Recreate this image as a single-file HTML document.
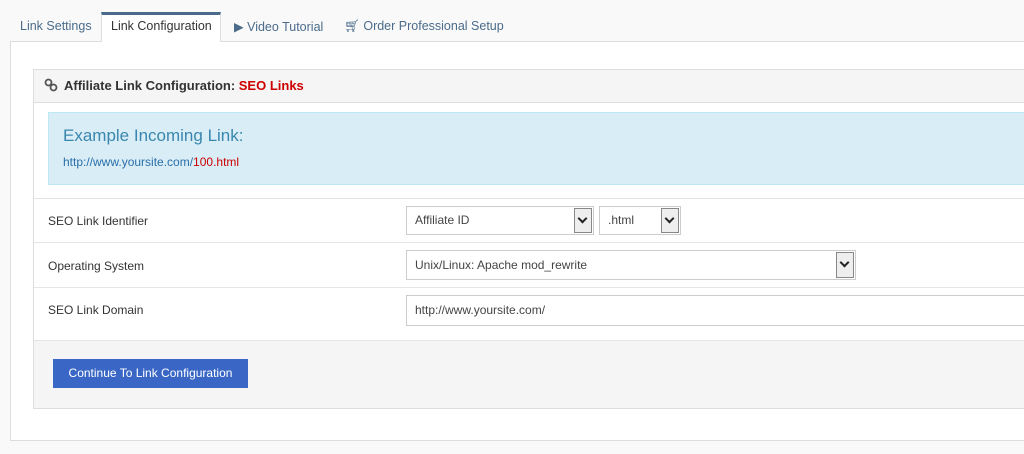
<!DOCTYPE html>
<html><head><style>
body{margin:0;width:1024px;height:454px;background:#f9f9f9;font-family:"Liberation Sans",sans-serif;font-size:12px;color:#333;position:relative;overflow:hidden}
.a{position:absolute}
.tab{position:absolute;top:19px;color:#4a6b8a;font-size:12.5px}
.sel{position:absolute;background:#fff;border:1px solid #ccc;box-sizing:border-box;padding-left:8px;font-size:12px;color:#444}
.arr{position:absolute;right:1px;top:1px;bottom:1px;width:18px;background:#eee;border:1px solid #888;box-sizing:border-box}
.arr:after{content:"";position:absolute;left:4px;top:calc(50% - 6px);width:5px;height:5px;border-right:2px solid #222;border-bottom:2px solid #222;transform:rotate(45deg)}
.lbl{position:absolute;left:48px;font-size:12px;color:#333}
.sep{position:absolute;left:34px;right:0;height:1px;background:#e5e5e5}
</style></head><body>
<div class="a" style="left:10px;top:41px;right:-5px;height:398px;background:#fff;border:1px solid #ddd"></div>
<div class="a" style="left:101px;top:12px;width:120px;height:30px;background:#fff;border:1px solid #ddd;border-top:3px solid #4a6b8a;border-bottom:none;box-sizing:border-box"></div>
<div class="tab" style="left:20px">Link Settings</div>
<div class="tab" style="left:111px;color:#333">Link Configuration</div>
<div class="tab" style="left:234px">▶ Video Tutorial</div>
<div class="tab" style="left:344px">🛒︎ Order Professional Setup</div>
<div class="a" style="left:33px;top:69px;right:-5px;height:338px;background:#fff;border:1px solid #ddd"></div>
<div class="a" style="left:34px;top:70px;right:0;height:32px;background:#f5f5f5;border-bottom:1px solid #ddd"></div>
<svg class="a" style="left:44px;top:78px" width="14" height="14" viewBox="0 0 14 14" fill="none" stroke="#555" stroke-width="1.8"><circle cx="4.5" cy="4.5" r="3"/><circle cx="9.5" cy="9.5" r="3"/></svg>
<div class="a" style="left:64px;top:78px;font-size:13px;font-weight:bold;color:#333">Affiliate Link Configuration: <span style="color:#c00">SEO Links</span></div>
<div class="a" style="left:48px;top:112px;right:-5px;height:71px;background:#d9edf7;border:1px solid #bce8f1"></div>
<div class="a" style="left:63px;top:126px;font-size:17px;color:#3a87ad">Example Incoming Link:</div>
<div class="a" style="left:63px;top:155px;font-size:12px;color:#2a6fa8">http://www.yoursite.com/<span style="color:#c00">100.html</span></div>
<div class="sep" style="top:198px"></div>
<div class="sep" style="top:242px"></div>
<div class="sep" style="top:287px"></div>
<div class="lbl" style="top:214px">SEO Link Identifier</div>
<div class="lbl" style="top:259px">Operating System</div>
<div class="lbl" style="top:303px">SEO Link Domain</div>
<div class="sel" style="left:406px;top:206px;width:188px;height:29px;line-height:27px">Affiliate ID<div class="arr"></div></div>
<div class="sel" style="left:599px;top:206px;width:82px;height:29px;line-height:27px">.html<div class="arr"></div></div>
<div class="sel" style="left:406px;top:250px;width:450px;height:30px;line-height:28px">Unix/Linux: Apache mod_rewrite<div class="arr"></div></div>
<div class="sel" style="left:406px;top:295px;width:630px;height:31px;line-height:29px">http://www.yoursite.com/</div>
<div class="a" style="left:34px;top:340px;right:0;height:67px;background:#f5f5f5;border-top:1px solid #e5e5e5"></div>
<div class="a" style="left:53px;top:359px;width:195px;height:29px;background:#3a67c6;color:#fff;font-size:12px;line-height:29px;text-align:center">Continue To Link Configuration</div>
</body></html>
